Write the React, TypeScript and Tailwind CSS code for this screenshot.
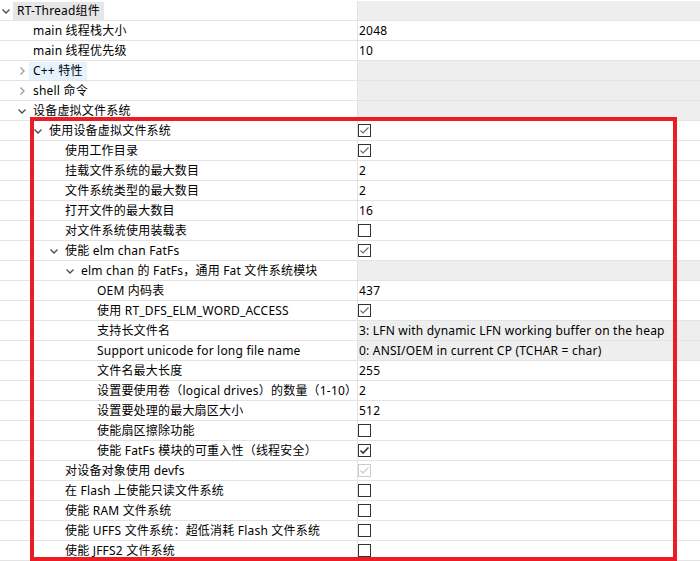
import React from 'react'

type Val =
  | { kind: 'none' }
  | { kind: 'text'; text: string; gray?: boolean }
  | { kind: 'check'; checked: boolean; strong?: boolean; disabled?: boolean }

type Row = {
  level: number
  label: string
  expand?: 'open' | 'closed'
  mark?: 'selected' | 'hover'
  value: Val
}

const rows: Row[] = [
  { level: 0, label: 'RT-Thread组件', expand: 'open', mark: 'selected', value: { kind: 'none' } },
  { level: 1, label: 'main 线程栈大小', value: { kind: 'text', text: '2048' } },
  { level: 1, label: 'main 线程优先级', value: { kind: 'text', text: '10' } },
  { level: 1, label: 'C++ 特性', expand: 'closed', mark: 'hover', value: { kind: 'none' } },
  { level: 1, label: 'shell 命令', expand: 'closed', value: { kind: 'none' } },
  { level: 1, label: '设备虚拟文件系统', expand: 'open', value: { kind: 'none' } },
  { level: 2, label: '使用设备虚拟文件系统', expand: 'open', value: { kind: 'check', checked: true } },
  { level: 3, label: '使用工作目录', value: { kind: 'check', checked: true } },
  { level: 3, label: '挂载文件系统的最大数目', value: { kind: 'text', text: '2' } },
  { level: 3, label: '文件系统类型的最大数目', value: { kind: 'text', text: '2' } },
  { level: 3, label: '打开文件的最大数目', value: { kind: 'text', text: '16' } },
  { level: 3, label: '对文件系统使用装载表', value: { kind: 'check', checked: false } },
  { level: 3, label: '使能 elm chan FatFs', expand: 'open', value: { kind: 'check', checked: true } },
  { level: 4, label: 'elm chan 的 FatFs，通用 Fat 文件系统模块', expand: 'open', value: { kind: 'none' } },
  { level: 5, label: 'OEM 内码表', value: { kind: 'text', text: '437' } },
  { level: 5, label: '使用 RT_DFS_ELM_WORD_ACCESS', value: { kind: 'check', checked: true } },
  { level: 5, label: '支持长文件名', value: { kind: 'text', text: '3: LFN with dynamic LFN working buffer on the heap', gray: true } },
  { level: 5, label: 'Support unicode for long file name', value: { kind: 'text', text: '0: ANSI/OEM in current CP (TCHAR = char)', gray: true } },
  { level: 5, label: '文件名最大长度', value: { kind: 'text', text: '255' } },
  { level: 5, label: '设置要使用卷（logical drives）的数量（1-10）', value: { kind: 'text', text: '2' } },
  { level: 5, label: '设置要处理的最大扇区大小', value: { kind: 'text', text: '512' } },
  { level: 5, label: '使能扇区擦除功能', value: { kind: 'check', checked: false } },
  { level: 5, label: '使能 FatFs 模块的可重入性（线程安全）', value: { kind: 'check', checked: true, strong: true } },
  { level: 3, label: '对设备对象使用 devfs', value: { kind: 'check', checked: true, disabled: true } },
  { level: 3, label: '在 Flash 上使能只读文件系统', value: { kind: 'check', checked: false } },
  { level: 3, label: '使能 RAM 文件系统', value: { kind: 'check', checked: false } },
  { level: 3, label: '使能 UFFS 文件系统：超低消耗 Flash 文件系统', value: { kind: 'check', checked: false } },
  { level: 3, label: '使能 JFFS2 文件系统', value: { kind: 'check', checked: false } },
]

const indent = ['pl-0', 'pl-4', 'pl-8', 'pl-12', 'pl-16', 'pl-20']

function Chevron({ state }: { state?: 'open' | 'closed' }) {
  if (!state) return <span className="w-[13px] shrink-0" />
  return (
    <span className="w-[13px] shrink-0 flex items-center">
      {state === 'open' ? (
        <svg width="10" height="10" viewBox="0 0 10 10" className="ml-[1px]">
          <path d="M1.5 3.5 L5 7 L8.5 3.5" fill="none" stroke="#4a4a4a" strokeWidth="1.3" />
        </svg>
      ) : (
        <svg width="10" height="10" viewBox="0 0 10 10" className="ml-[1px]">
          <path d="M3.5 1.5 L7 5 L3.5 8.5" fill="none" stroke="#9a9a9a" strokeWidth="1.3" />
        </svg>
      )}
    </span>
  )
}

function Checkbox({ checked, strong, disabled }: { checked: boolean; strong?: boolean; disabled?: boolean }) {
  const border = disabled ? 'border-[#cccccc]' : 'border-[#333333]'
  const tick = disabled ? '#c8c8c8' : strong ? '#333333' : '#6a6a6a'
  return (
    <span className={`w-[13px] h-[13px] border ${border} bg-white flex items-center justify-center`}>
      {checked && (
        <svg width="11" height="11" viewBox="0 0 11 11">
          <path d="M1.5 5.5 L4 8 L9.5 2.5" fill="none" stroke={tick} strokeWidth={strong ? 1.6 : 1.1} />
        </svg>
      )}
    </span>
  )
}

function ValueCell({ value }: { value: Val }) {
  if (value.kind === 'none') return <div className="flex-1 h-full bg-[#eeeeee]" />
  if (value.kind === 'check')
    return (
      <div className="flex-1 h-full flex items-center">
        <Checkbox checked={value.checked} strong={value.strong} disabled={value.disabled} />
      </div>
    )
  return (
    <div className={`flex-1 h-full flex items-center pl-[1px] whitespace-nowrap ${value.gray ? 'bg-[#eeeeee]' : ''}`}>
      {value.text}
    </div>
  )
}

function TreeRow({ row }: { row: Row }) {
  const mark =
    row.mark === 'selected' ? 'bg-[#e6e6e6]' : row.mark === 'hover' ? 'bg-[#e5f3ff]' : ''
  return (
    <div className="flex h-5 border-b border-[#e3e3e3]">
      <div className={`w-[358px] shrink-0 flex items-center border-r border-[#e3e3e3] ${indent[row.level]}`}>
        <Chevron state={row.expand} />
        <span className={`h-[18px] flex items-center px-[4px] whitespace-nowrap ${mark}`}>{row.label}</span>
      </div>
      <ValueCell value={row.value} />
    </div>
  )
}

export default function App() {
  return (
    <div
      className="relative w-[700px] h-[561px] overflow-hidden bg-white pt-[1px] text-[12px] tracking-[0.2px] text-black"
      style={{ fontFamily: '"Noto Sans", "Noto Sans CJK SC", sans-serif' }}
    >
      {rows.map((row, i) => (
        <TreeRow key={i} row={row} />
      ))}
      <div className="absolute left-[30px] top-[117px] w-[647px] h-[444px] border-[4px] border-[#ec1c24] pointer-events-none" />
    </div>
  )
}
